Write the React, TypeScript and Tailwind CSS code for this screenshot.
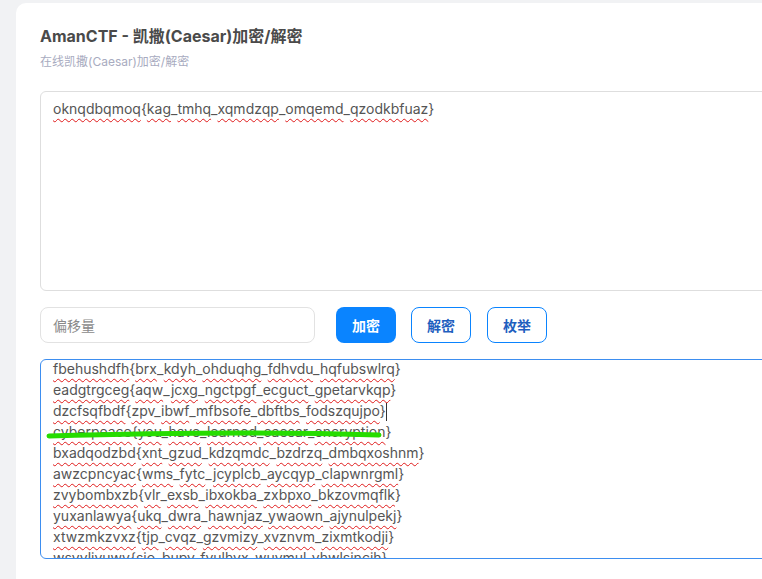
import React from 'react';

const INPUT = 'oknqdbqmoq{kag_tmhq_xqmdzqp_omqemd_qzodkbfuaz}';

const OUTPUT = [
  'fbehushdfh{brx_kdyh_ohduqhg_fdhvdu_hqfubswlrq}',
  'eadgtrgceg{aqw_jcxg_ngctpgf_ecguct_gpetarvkqp}',
  'dzcfsqfbdf{zpv_ibwf_mfbsofe_dbftbs_fodszqujpo}',
  'cyberpeace{you_have_learned_caesar_encryption}',
  'bxadqodzbd{xnt_gzud_kdzqmdc_bzdrzq_dmbqxoshnm}',
  'awzcpncyac{wms_fytc_jcyplcb_aycqyp_clapwnrgml}',
  'zvybombxzb{vlr_exsb_ibxokba_zxbpxo_bkzovmqflk}',
  'yuxanlawya{ukq_dwra_hawnjaz_ywaown_ajynulpekj}',
  'xtwzmkzvxz{tjp_cvqz_gzvmizy_xvznvm_zixmtkodji}',
  'wsvyljyuwy{sio_bupy_fyulhyx_wuymul_yhwlsjncih}',
];

// words get the spell-check squiggle, punctuation does not
const Spelled: React.FC<{ text: string }> = ({ text }) => (
  <>
    {text.split(/([a-z]+)/).map((part, i) =>
      /^[a-z]+$/.test(part) ? (
        <span
          key={i}
          className="underline decoration-wavy decoration-[#e01b1b] decoration-1 underline-offset-[4px]"
        >
          {part}
        </span>
      ) : (
        <span key={i}>{part}</span>
      )
    )}
  </>
);

export default function App() {
  return (
    <div
      className="relative w-[762px] h-[579px] overflow-hidden bg-[#f1f2f4]"
      style={{ fontFamily: 'Inter, "Noto Sans CJK SC", sans-serif' }}
    >
      <div className="ml-[16px] mt-[3px] w-[900px] h-[600px] bg-white rounded-tl-[10px] pl-[24px] pt-[21px]">
        {/* Header */}
        <h1 className="text-[16px] leading-[24px] font-bold text-[#4a4a4a]">
          AmanCTF - 凯撒(Caesar)加密/解密
        </h1>
        <p className="mt-[5px] text-[12px] leading-[18px] text-[#a8abc0]">在线凯撒(Caesar)加密/解密</p>

        {/* Input text */}
        <div className="mt-[20px] w-[760px] h-[200px] border border-[#dedede] rounded-[6px] px-[12px] pt-[6px] text-[14px] leading-[21px] text-[#555]">
          <Spelled text={INPUT} />
        </div>

        {/* Controls */}
        <div className="mt-[16px] flex items-center">
          <div className="w-[275px] h-[36px] border border-[#e2e2e2] rounded-[8px] px-[12px] flex items-center text-[14px] text-[#8a8a8a]">
            偏移量
          </div>
          <button className="ml-[21px] w-[60px] h-[36px] rounded-[8px] bg-[#0a84ff] text-white text-[14px] font-semibold">
            加密
          </button>
          <button className="ml-[15px] w-[60px] h-[36px] rounded-[8px] border border-[#0a84ff] bg-white text-[#1f5fbf] text-[14px] font-semibold">
            解密
          </button>
          <button className="ml-[16px] w-[60px] h-[36px] rounded-[8px] border border-[#0a84ff] bg-white text-[#1f5fbf] text-[14px] font-semibold">
            枚举
          </button>
        </div>

        {/* Result (scrolled) */}
        <div className="mt-[16px] w-[760px] h-[200px] border border-[#3d8ef0] rounded-[6px] px-[12px] overflow-hidden text-[14px] leading-[21px] text-[#555]">
          <div className="-mt-[2px]">
            {OUTPUT.map((line, i) => (
              <div key={i} className="whitespace-nowrap">
                <Spelled text={line} />
                {i === 2 && <span className="inline-block w-px h-[18px] bg-[#333] align-middle" />}
              </div>
            ))}
          </div>
        </div>
      </div>

      {/* green marker stroke drawn over the screenshot */}
      <svg className="absolute left-0 top-0 pointer-events-none" width="762" height="579">
        <path
          d="M49 436 C 120 434, 250 431, 379 435"
          fill="none"
          stroke="#26dc00"
          strokeWidth="5"
          strokeLinecap="round"
        />
      </svg>
    </div>
  );
}
